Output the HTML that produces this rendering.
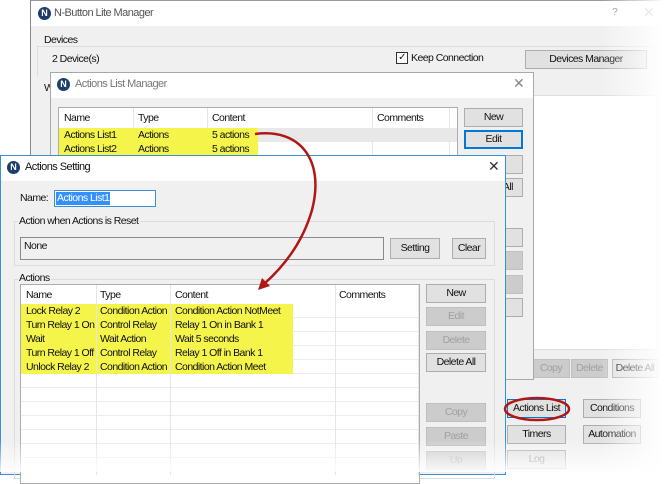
<!DOCTYPE html>
<html><head><meta charset="utf-8"><style>
*{box-sizing:border-box;margin:0;padding:0}
body{width:672px;height:472px;background:#fff;position:relative;overflow:hidden;font-family:"Liberation Sans",sans-serif;font-size:10.5px;color:#111;letter-spacing:-0.55px}
.a{position:absolute;white-space:nowrap}
.btn{position:absolute;background:#e1e1e1;border:1px solid #adadad;text-align:center;line-height:17px}
.dis{color:#a0a0a0;background:#cccccc;border-color:#bfbfbf}
.win{position:absolute;background:#f0f0f0}
.tb{position:absolute;left:0;right:0;top:0;background:#fff}
.logo{position:absolute;width:13px;height:13px;border-radius:50%;background:#1c3d6e;color:#fff;font-size:9px;font-weight:bold;text-align:center;line-height:13px;letter-spacing:0}
.grp{position:absolute;border:1px solid #dcdcdc}
.row{position:absolute;height:14px;line-height:14px}
</style></head><body>
<div class="win" style="left:30px;top:0;width:632px;height:472px;border-left:1px solid #8a8a8a;border-top:1px solid #999">
 <div class="tb" style="height:25px"></div>
</div>
<div class="logo" style="left:38px;top:7px">N</div>
<div class="a" style="left:54px;top:7px;color:#555;font-size:11px">N-Button Lite Manager</div>
<div class="a" style="left:612px;top:6px;color:#888">?</div>
<div class="a" style="left:643px;top:4px;color:#aaa;font-size:14px">✕</div>
<div class="grp" style="left:37px;top:46px;width:618px;height:30px;border-bottom:none"></div>
<div class="a" style="left:43px;top:34px;background:#f0f0f0;padding:0 1px">Devices</div>
<div class="a" style="left:52px;top:53px">2 Device(s)</div>
<div class="a" style="left:396px;top:52px;width:12px;height:12px;border:1px solid #333;background:#fff;font-size:10px;line-height:10px;text-align:center">✓</div>
<div class="a" style="left:411px;top:52px">Keep Connection</div>
<div class="btn" style="left:525px;top:50px;width:122px;height:19px">Devices Manager</div>
<div class="a" style="left:44px;top:82px">W</div>
<div class="a" style="left:533px;top:95px;width:124px;height:255px;background:#fff;border:1px solid #ddd"></div>
<div class="btn dis" style="left:493px;top:359px;width:36px;height:19px">Edit</div>
<div class="btn dis" style="left:532px;top:359px;width:38px;height:19px">Copy</div>
<div class="btn dis" style="left:571px;top:359px;width:37px;height:19px">Delete</div>
<div class="btn" style="left:612px;top:359px;width:46px;height:19px">Delete All</div>
<div class="btn" style="left:507px;top:399px;width:59px;height:19px;border-color:#0078d7">Actions List</div>
<div class="btn" style="left:583px;top:399px;width:58px;height:19px">Conditions</div>
<div class="btn" style="left:507px;top:425px;width:59px;height:19px">Timers</div>
<div class="btn" style="left:583px;top:425px;width:58px;height:19px">Automation</div>
<div class="btn" style="left:507px;top:450px;width:59px;height:19px;color:#888">Log</div>

<div class="win" style="left:50px;top:72px;width:484px;height:308px;border:1px solid #a8a8a8">
 <div class="tb" style="height:25px"></div>
</div>
<div class="logo" style="left:57px;top:78px">N</div>
<div class="a" style="left:75px;top:78px;color:#777;font-size:11px">Actions List Manager</div>
<div class="a" style="left:513px;top:75px;color:#888;font-size:14px">✕</div>
<div class="a" style="left:58px;top:107px;width:400px;height:260px;background:#fff;border:1px solid #adadad"></div>
<div class="a" style="left:64px;top:112px">Name</div>
<div class="a" style="left:138px;top:112px">Type</div>
<div class="a" style="left:212px;top:112px">Content</div>
<div class="a" style="left:377px;top:112px">Comments</div>
<div class="a" style="left:133px;top:108px;width:1px;height:50px;background:#e5e5e5"></div>
<div class="a" style="left:207px;top:108px;width:1px;height:50px;background:#e5e5e5"></div>
<div class="a" style="left:372px;top:108px;width:1px;height:50px;background:#e5e5e5"></div>
<div class="a" style="left:449px;top:108px;width:1px;height:50px;background:#e5e5e5"></div>
<div class="row" style="left:59px;top:128px;width:398px;background:#e8e8e8"></div>
<div class="row" style="left:59px;top:128px;width:199px;background:#f4f44a"></div>
<div class="row" style="left:59px;top:142px;width:199px;background:#f4f44a"></div>
<div class="row a" style="left:64px;top:128px">Actions List1</div>
<div class="row a" style="left:138px;top:128px">Actions</div>
<div class="row a" style="left:212px;top:128px">5 actions</div>
<div class="row a" style="left:64px;top:142px">Actions List2</div>
<div class="row a" style="left:138px;top:142px">Actions</div>
<div class="row a" style="left:212px;top:142px">5 actions</div>
<div class="btn" style="left:464px;top:108px;width:59px;height:19px">New</div>
<div class="btn" style="left:464px;top:130px;width:59px;height:19px;border:2px solid #0078d7;line-height:15px">Edit</div>
<div class="btn" style="left:464px;top:155px;width:59px;height:19px"></div>
<div class="btn" style="left:464px;top:178px;width:59px;height:19px">Delete All</div>
<div class="btn" style="left:464px;top:228px;width:59px;height:19px"></div>
<div class="btn dis" style="left:464px;top:251px;width:59px;height:19px"></div>
<div class="btn dis" style="left:464px;top:275px;width:59px;height:19px"></div>
<div class="btn" style="left:464px;top:298px;width:59px;height:19px"></div>

<div class="win" style="left:0;top:155px;width:506px;height:320px;border:1px solid #3a8fd8">
 <div class="tb" style="height:25px"></div>
</div>
<div class="logo" style="left:7px;top:161px">N</div>
<div class="a" style="left:25px;top:161px;font-size:11px">Actions Setting</div>
<div class="a" style="left:488px;top:158px;color:#333;font-size:14px">✕</div>
<div class="a" style="left:20px;top:192px">Name:</div>
<div class="a" style="left:54px;top:190px;width:102px;height:17px;background:#fff;border:1px solid #3a8fd8"></div>
<div class="a" style="left:56px;top:192px;background:#3390ff;color:#fff;padding:0 1px;line-height:13px">Actions List1</div>
<div class="grp" style="left:14px;top:221px;width:481px;height:45px"></div>
<div class="a" style="left:18px;top:215px;background:#f0f0f0;padding:0 1px">Action when Actions is Reset</div>
<div class="a" style="left:20px;top:237px;width:364px;height:23px;background:#f0f0f0;border:1px solid #8a8a8a;padding:2px 3px">None</div>
<div class="btn" style="left:390px;top:238px;width:50px;height:21px;line-height:19px">Setting</div>
<div class="btn" style="left:452px;top:238px;width:34px;height:21px;line-height:19px">Clear</div>
<div class="grp" style="left:14px;top:279px;width:481px;height:200px"></div>
<div class="a" style="left:18px;top:272px;background:#f0f0f0;padding:0 1px">Actions</div>
<div class="a" style="left:20px;top:284px;width:400px;height:200px;background:#fff;border:1px solid #adadad"></div>
<div class="a" style="left:26px;top:289px">Name</div>
<div class="a" style="left:100px;top:289px">Type</div>
<div class="a" style="left:175px;top:289px">Content</div>
<div class="a" style="left:339px;top:289px">Comments</div>
<div class="a" style="left:21px;top:304px;width:398px;height:170px;background:repeating-linear-gradient(#fff 0,#fff 13px,#ececec 13px,#ececec 14px)"></div>
<div class="a" style="left:21px;top:304px;width:272px;height:70px;background:#f4f44a"></div>
<div class="a" style="left:96px;top:285px;width:1px;height:190px;background:#e5e5e5"></div>
<div class="a" style="left:170px;top:285px;width:1px;height:190px;background:#e5e5e5"></div>
<div class="a" style="left:335px;top:285px;width:1px;height:190px;background:#e5e5e5"></div>
<div class="a" style="left:418px;top:285px;width:1px;height:190px;background:#e5e5e5"></div>
<div class="row a" style="left:26px;top:304px">Lock Relay 2</div><div class="row a" style="left:100px;top:304px">Condition Action</div><div class="row a" style="left:175px;top:304px">Condition Action NotMeet</div>
<div class="row a" style="left:26px;top:318px">Turn Relay 1 On</div><div class="row a" style="left:100px;top:318px">Control Relay</div><div class="row a" style="left:175px;top:318px">Relay 1 On in Bank 1</div>
<div class="row a" style="left:26px;top:332px">Wait</div><div class="row a" style="left:100px;top:332px">Wait Action</div><div class="row a" style="left:175px;top:332px">Wait 5 seconds</div>
<div class="row a" style="left:26px;top:346px">Turn Relay 1 Off</div><div class="row a" style="left:100px;top:346px">Control Relay</div><div class="row a" style="left:175px;top:346px">Relay 1 Off in Bank 1</div>
<div class="row a" style="left:26px;top:360px">Unlock Relay 2</div><div class="row a" style="left:100px;top:360px">Condition Action</div><div class="row a" style="left:175px;top:360px">Condition Action Meet</div>
<div class="btn" style="left:426px;top:284px;width:60px;height:19px">New</div>
<div class="btn dis" style="left:426px;top:307px;width:60px;height:19px">Edit</div>
<div class="btn dis" style="left:426px;top:331px;width:60px;height:19px">Delete</div>
<div class="btn" style="left:426px;top:353px;width:60px;height:19px">Delete All</div>
<div class="btn dis" style="left:426px;top:403px;width:60px;height:19px">Copy</div>
<div class="btn dis" style="left:426px;top:427px;width:60px;height:19px">Paste</div>
<div class="btn dis" style="left:426px;top:451px;width:60px;height:19px">Up</div>

<div class="a" style="left:600px;top:0;width:72px;height:472px;background:linear-gradient(90deg,rgba(255,255,255,0),#fff 90%)"></div>
<div class="a" style="left:0;top:440px;width:672px;height:32px;background:linear-gradient(rgba(255,255,255,0),rgba(255,255,255,.9))"></div>

<svg class="a" style="left:0;top:0" width="672" height="472">
<path d="M255,134 C300,128 325,160 312,210 C302,245 282,268 264,284" fill="none" stroke="#b01818" stroke-width="2.5"/>
<path d="M258,290 L262,278 L270,286 Z" fill="#b01818"/>
<ellipse cx="537" cy="409" rx="32" ry="11" fill="none" stroke="#b01818" stroke-width="2.5"/>
</svg>
</body></html>
